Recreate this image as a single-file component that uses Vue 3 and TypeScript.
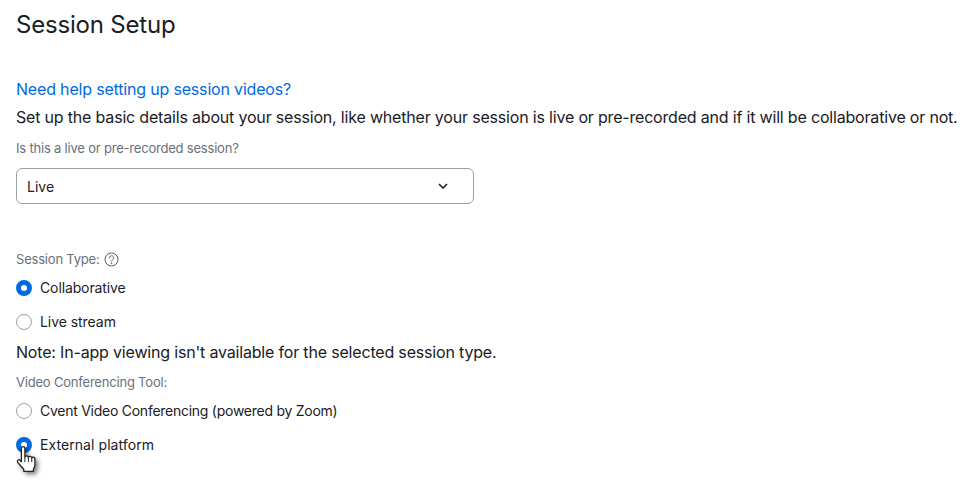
<script setup lang="ts">
interface Option {
  label: string
  checked: boolean
  spacing?: string
}

const sessionTypes: Option[] = [
  { label: 'Collaborative', checked: true, spacing: 'snug' },
  { label: 'Live stream', checked: false }
]

const tools: Option[] = [
  { label: 'Cvent Video Conferencing (powered by Zoom)', checked: false, spacing: 'tight' },
  { label: 'External platform', checked: true, spacing: 'loose' }
]
</script>

<template>
  <div class="page">
    <h1 class="title">Session Setup</h1>
    <a class="help">Need help setting up session videos?</a>
    <p class="intro">Set up the basic details about your session, like whether your session is live or pre-recorded and if it will be collaborative or not.</p>
    <div class="label">Is this a live or pre-recorded session?</div>
    <div class="select">
      <span>Live</span>
      <svg class="chevron" width="10" height="6" viewBox="0 0 10 6">
        <path d="M1 1l4 4 4-4" fill="none" stroke="#1a2026" stroke-width="1.6" />
      </svg>
    </div>

    <div class="label type-label">
      Session Type:
      <svg class="help-icon" width="15" height="15" viewBox="0 0 15 15">
        <circle cx="7.5" cy="7.5" r="6.5" fill="none" stroke="#555c64" stroke-width="1" />
        <path d="M5.4 5.9a2.1 2.1 0 1 1 3.3 1.7c-.8.5-1.2.9-1.2 1.8" fill="none" stroke="#555c64" stroke-width="1" />
        <circle cx="7.5" cy="11.2" r=".7" fill="#555c64" />
      </svg>
    </div>
    <div class="radios">
      <div v-for="o in sessionTypes" :key="o.label" class="radio" :class="o.spacing">
        <span class="dot" :class="{ on: o.checked }"></span>
        {{ o.label }}
      </div>
    </div>
    <p class="note">Note: In-app viewing isn't available for the selected session type.</p>
    <div class="label tool-label">Video Conferencing Tool:</div>
    <div class="radios">
      <div v-for="o in tools" :key="o.label" class="radio" :class="o.spacing">
        <span class="dot" :class="{ on: o.checked }"></span>
        {{ o.label }}
      </div>
    </div>

    <!-- the mouse pointer lying over the last radio -->
    <svg class="cursor" width="33" height="40" viewBox="0 0 26 32">
      <defs>
        <filter id="cursor-shadow" x="-30%" y="-30%" width="170%" height="170%">
          <feDropShadow dx="2" dy="2" stdDeviation="1.5" flood-color="#000" flood-opacity="0.5" />
        </filter>
      </defs>
      <path
        d="M6.5 2.5c0-1.6 2.8-1.6 2.8 0v7.2c.3-1.3 2.7-1.3 2.8.2.3-1.2 2.6-1.1 2.7.4.5-1 2.5-.7 2.5.9v4.6c0 1.6-.6 2.6-1.2 3.6v1.6H8.4v-1.6L3.6 14c-1.1-1.5.8-3 2-1.8l.9 1.2z"
        fill="#fff" stroke="#222" stroke-width="1" stroke-linejoin="round" filter="url(#cursor-shadow)"
      />
      <path d="M9.3 9.7v4M12.1 9.9v3.8M14.8 10.3v3.4" stroke="#222" stroke-width=".8" fill="none" />
    </svg>
  </div>
</template>

<style>
body {
  background: #fff;
}
</style>

<style scoped>
.page {
  position: relative;
  box-sizing: border-box;
  min-height: 489px;
  padding: 11px 0 0 16px;
  font-family: Inter, Roboto, "Liberation Sans", sans-serif;
  color: #1a2026;
}
.title {
  margin: 0;
  font-size: 24px;
  line-height: 28px;
  font-weight: 400;
  letter-spacing: -0.2px;
}
.help {
  display: block;
  margin-top: 39px;
  font-size: 16px;
  line-height: 22px;
  letter-spacing: -0.18px;
  color: #006ae1;
}
.intro {
  margin: 6px 0 0;
  font-size: 16px;
  line-height: 22px;
  letter-spacing: -0.185px;
  white-space: nowrap;
}
.label {
  font-size: 13px;
  line-height: 16px;
  letter-spacing: -0.2px;
  color: #69717a;
}
.intro + .label {
  margin-top: 12px;
}
.select {
  box-sizing: border-box;
  display: flex;
  justify-content: space-between;
  align-items: center;
  width: 458px;
  height: 36px;
  margin-top: 12px;
  padding: 0 25px 0 10px;
  border: 1px solid #9a9fa6;
  border-radius: 6px;
  font-size: 14px;
}
.type-label {
  display: flex;
  align-items: center;
  gap: 4px;
  margin-top: 47px;
}
.radios {
  display: flex;
  flex-direction: column;
  gap: 14px;
  margin-top: 10px;
}
.radio {
  display: flex;
  align-items: center;
  gap: 8px;
  height: 20px;
  font-size: 14px;
  letter-spacing: -0.05px;
}
.radio.snug {
  letter-spacing: -0.12px;
}
.radio.tight {
  letter-spacing: -0.26px;
}
.radio.loose {
  letter-spacing: 0.07px;
}
.dot {
  box-sizing: border-box;
  width: 16px;
  height: 16px;
  margin-top: 1px;
  border: 1px solid #9a9fa6;
  border-radius: 50%;
}
.dot.on {
  border: 5px solid #006ae1;
}
.note {
  margin: 10px 0 0;
  font-size: 16px;
  line-height: 22px;
  letter-spacing: -0.18px;
}
.tool-label {
  margin-top: 11px;
}
.tool-label + .radios {
  margin-top: 10px;
}
.cursor {
  position: absolute;
  left: 13px;
  top: 445px;
}
</style>
